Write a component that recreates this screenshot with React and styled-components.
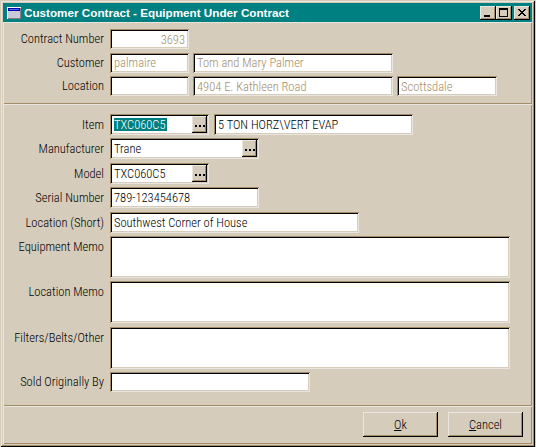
import React from 'react';
import styled, { createGlobalStyle } from 'styled-components';

const C = {
  face: '#D5CCBB',
  hi: '#EAE6DD',
  sh: '#A28D68',
  dk: '#000000',
  teal: '#008080',
  gray: '#A28D68',
};

const GlobalStyle = createGlobalStyle`
  html, body { margin: 0; padding: 0; background: ${C.face}; }
  body {
    width: 536px; height: 447px; overflow: hidden;
    font-family: "Roboto Condensed", "Liberation Sans", Arial, sans-serif;
    font-size: 12.5px;
    font-weight: 350;
    color: #000;
  }
  #root { width: 536px; height: 447px; }
`;

const Window = styled.div`
  box-sizing: border-box;
  width: 535px;
  height: 447px;
  padding: 3px;
  background: ${C.face};
  box-shadow: inset 1px 1px ${C.face}, inset -1px -1px ${C.dk},
    inset 2px 2px ${C.hi}, inset -2px -2px ${C.sh};
  display: flex;
  flex-direction: column;
`;

const TitleBar = styled.div`
  height: 19px;
  flex: none;
  background: ${C.teal};
  display: flex;
  align-items: center;
  padding: 0 2px 0 4px;
`;

const TitleText = styled.div`
  font-family: "Liberation Sans", Arial, sans-serif;
  font-weight: bold;
  font-size: 11.7px;
  color: #fff;
  margin-left: 3px;
  flex: 1;
  white-space: nowrap;
`;

const CapButton = styled.div`
  width: 16px;
  height: 14px;
  background: ${C.face};
  box-shadow: inset -1px -1px ${C.dk}, inset 1px 1px ${C.hi}, inset -2px -2px ${C.sh};
  margin-left: ${(p) => p.$gap || 0}px;
  svg { display: block; }
`;

const Panel = styled.div`
  box-sizing: border-box;
  flex: none;
  box-shadow: inset 1px 1px ${C.hi}, inset -1px -1px ${C.sh};
`;

const HeaderPanel = styled(Panel)`
  height: 82px;
  padding-top: 7px;
  display: flex;
  flex-direction: column;
  gap: 3.5px;
`;

const BodyPanel = styled(Panel)`
  height: 302px;
  padding-top: 10px;
  display: flex;
  flex-direction: column;
  gap: 3.4px;
`;

const FooterPanel = styled(Panel)`
  height: 38px;
  display: flex;
  justify-content: flex-end;
  align-items: flex-start;
  gap: 10px;
  padding: 6px 9px 0 0;
`;

const Row = styled.div`
  display: flex;
  align-items: flex-start;
  height: ${(p) => p.$h}px;
`;

const Label = styled.div`
  width: 101px;
  margin-right: 6px;
  text-align: right;
  white-space: nowrap;
  line-height: ${(p) => p.$lh}px;
  flex: none;
`;

const Field = styled.div`
  box-sizing: border-box;
  flex: none;
  width: ${(p) => p.$w}px;
  height: ${(p) => p.$h}px;
  margin-left: ${(p) => p.$ml || 0}px;
  padding: 2px;
  background: #fff;
  box-shadow: inset 1px 1px ${C.sh}, inset -1px -1px ${C.hi},
    inset 2px 2px ${C.dk}, inset -2px -2px ${C.face};
  display: flex;
  align-items: center;
  color: ${(p) => (p.$disabled ? C.gray : '#000')};
  text-align: ${(p) => (p.$right ? 'right' : 'left')};
`;

const FieldText = styled.span`
  flex: 1;
  padding: 0 2px;
  white-space: nowrap;
  overflow: hidden;
`;

const Selected = styled.span`
  background: ${C.teal};
  color: #fff;
  display: inline-block;
  line-height: 13px;
  padding-right: 1px;
`;

const Browse = styled.div`
  width: 15px;
  height: 100%;
  flex: none;
  background: ${C.face};
  box-shadow: inset -1px -1px ${C.dk}, inset 1px 1px ${C.hi}, inset -2px -2px ${C.sh};
  svg { display: block; }
`;

const Btn = styled.button`
  width: 75px;
  height: 25px;
  border: none;
  padding: 0;
  background: ${C.face};
  font: inherit;
  color: #000;
  box-shadow: inset -1px -1px ${C.dk}, inset 1px 1px ${C.hi}, inset -2px -2px ${C.sh};
  u { text-decoration: underline; }
`;

const WinIcon = () => (
  <svg width="14" height="12" viewBox="0 0 14 12" shapeRendering="crispEdges">
    <rect x="0" y="0" width="14" height="12" fill="#ffffff" />
    <rect x="1" y="1" width="13" height="11" fill="#808080" />
    <rect x="1" y="1" width="12" height="10" fill="#c8c8d8" />
    <rect x="1" y="1" width="12" height="3" fill="#0000a8" />
    <rect x="2" y="2" width="10" height="1" fill="#3a6ee8" />
  </svg>
);

const MinIcon = () => (
  <svg width="16" height="14" viewBox="0 0 16 14" shapeRendering="crispEdges">
    <rect x="4" y="9" width="6" height="2" fill="#000" />
  </svg>
);

const MaxIcon = () => (
  <svg width="16" height="14" viewBox="0 0 16 14" shapeRendering="crispEdges">
    <rect x="3" y="2" width="9" height="2" fill="#000" />
    <rect x="3" y="2" width="1" height="9" fill="#000" />
    <rect x="11" y="2" width="1" height="9" fill="#000" />
    <rect x="3" y="10" width="9" height="1" fill="#000" />
  </svg>
);

const X_ROWS = ['11000011', '01100110', '00111100', '00011000', '00111100', '01100110', '11000011'];

const CloseIcon = () => (
  <svg width="16" height="14" viewBox="0 0 16 14" shapeRendering="crispEdges">
    {X_ROWS.flatMap((row, y) =>
      row.split('').map((c, x) =>
        c === '1' ? <rect key={`${x}-${y}`} x={4 + x} y={3 + y} width="1" height="1" fill="#000" /> : null
      )
    )}
  </svg>
);

const Dots = () => (
  <svg width="15" height="17" viewBox="0 0 15 17" shapeRendering="crispEdges">
    <rect x="3" y="9" width="2" height="2" fill="#000" />
    <rect x="7" y="9" width="2" height="2" fill="#000" />
    <rect x="11" y="9" width="2" height="2" fill="#000" />
  </svg>
);

const InputRow = ({ label, h = 21, children }) => (
  <Row $h={h}>
    <Label $lh={h}>{label}</Label>
    {children}
  </Row>
);

const MemoRow = ({ label }) => (
  <Row $h={42}>
    <Label $lh={21}>{label}</Label>
    <Field $w={400} $h={42} />
  </Row>
);

export default function App() {
  return (
    <>
      <GlobalStyle />
      <Window>
        <TitleBar>
          <WinIcon />
          <TitleText>Customer Contract - Equipment Under Contract</TitleText>
          <CapButton><MinIcon /></CapButton>
          <CapButton><MaxIcon /></CapButton>
          <CapButton $gap={2}><CloseIcon /></CapButton>
        </TitleBar>

        <HeaderPanel>
          <InputRow label="Contract Number" h={20}>
            <Field $w={79} $h={20} $disabled $right>
              <FieldText>3693</FieldText>
            </Field>
          </InputRow>
          <InputRow label="Customer" h={20}>
            <Field $w={79} $h={20} $disabled>
              <FieldText>palmaire</FieldText>
            </Field>
            <Field $w={200} $h={20} $ml={4} $disabled>
              <FieldText>Tom and Mary Palmer</FieldText>
            </Field>
          </InputRow>
          <InputRow label="Location" h={20}>
            <Field $w={79} $h={20} $disabled />
            <Field $w={200} $h={20} $ml={4} $disabled>
              <FieldText>4904 E. Kathleen Road</FieldText>
            </Field>
            <Field $w={100} $h={20} $ml={4} $disabled>
              <FieldText>Scottsdale</FieldText>
            </Field>
          </InputRow>
        </HeaderPanel>

        <BodyPanel>
          <InputRow label="Item">
            <Field $w={99} $h={21}>
              <FieldText><Selected>TXC060C5</Selected></FieldText>
              <Browse><Dots /></Browse>
            </Field>
            <Field $w={199} $h={21} $ml={5}>
              <FieldText>5 TON HORZ\VERT EVAP</FieldText>
            </Field>
          </InputRow>
          <InputRow label="Manufacturer">
            <Field $w={149} $h={21}>
              <FieldText>Trane</FieldText>
              <Browse><Dots /></Browse>
            </Field>
          </InputRow>
          <InputRow label="Model">
            <Field $w={99} $h={21}>
              <FieldText>TXC060C5</FieldText>
              <Browse><Dots /></Browse>
            </Field>
          </InputRow>
          <InputRow label="Serial Number">
            <Field $w={149} $h={21}>
              <FieldText>789-123454678</FieldText>
            </Field>
          </InputRow>
          <InputRow label="Location (Short)">
            <Field $w={249} $h={21}>
              <FieldText>Southwest Corner of House</FieldText>
            </Field>
          </InputRow>
          <MemoRow label="Equipment Memo" />
          <MemoRow label="Location Memo" />
          <MemoRow label="Filters/Belts/Other" />
          <InputRow label="Sold Originally By" h={20}>
            <Field $w={200} $h={20} />
          </InputRow>
        </BodyPanel>

        <FooterPanel>
          <Btn><u>O</u>k</Btn>
          <Btn><u>C</u>ancel</Btn>
        </FooterPanel>
      </Window>
    </>
  );
}
